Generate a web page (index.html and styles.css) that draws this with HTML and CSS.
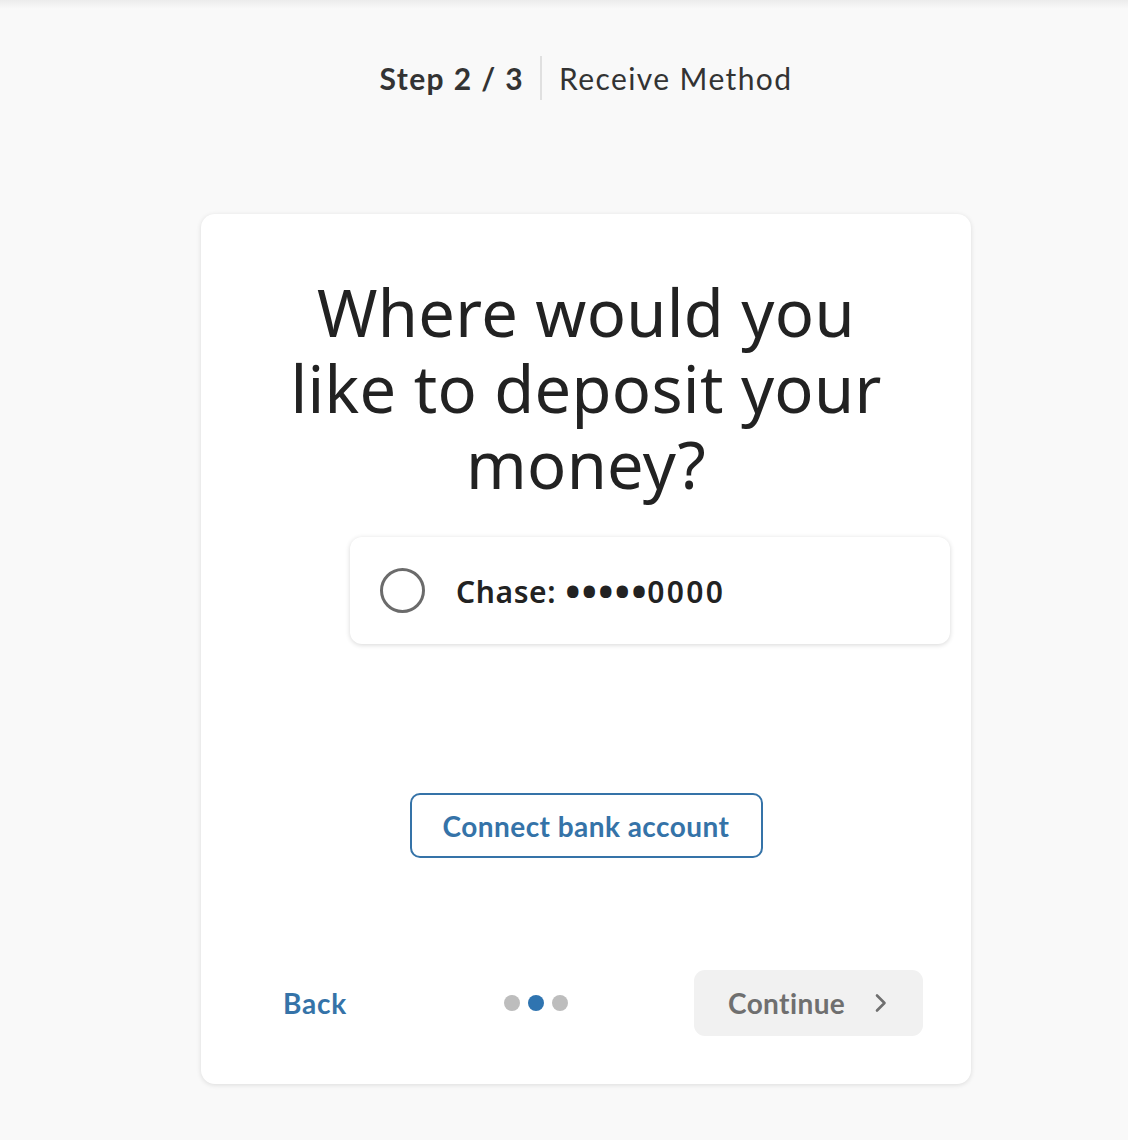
FILE: index.html
```html
<!DOCTYPE html>
<html lang="en">
<head>
<meta charset="utf-8">
<title>Receive Method</title>
<link rel="stylesheet" href="styles.css">
</head>
<body>
<div class="page">
  <header class="steps">
    <span class="step-num">Step 2 / 3</span>
    <span class="step-sep"></span>
    <span class="step-name">Receive Method</span>
  </header>
  <main class="card">
    <h1 class="title">Where would you like to deposit your money?</h1>
    <div class="options">
      <label class="option">
        <span class="radio"></span>
        <span class="option-text">Chase: <span class="mask">•••••</span><span class="digits">0000</span></span>
      </label>
    </div>
    <div class="connect-wrap">
      <button class="connect">Connect bank account</button>
    </div>
    <footer class="footer">
      <button class="back">Back</button>
      <div class="dots">
        <span class="dot"></span>
        <span class="dot dot-active"></span>
        <span class="dot"></span>
      </div>
      <button class="continue">Continue
        <svg class="chev" width="14" height="20" viewBox="0 0 14 20"><path d="M3 2.5 L10.5 10 L3 17.5" fill="none" stroke="#6f6f6f" stroke-width="2.6" stroke-linecap="round" stroke-linejoin="round"/></svg>
      </button>
    </footer>
  </main>
</div>
</body>
</html>
```

FILE: styles.css
```css
html, body {
  margin: 0;
  padding: 0;
}
body {
  background: #f9f9f9;
  font-family: "Lato", "Open Sans", sans-serif;
  color: #222;
}
.page {
  min-height: 1140px;
  background: linear-gradient(#ececec 0px, #f9f9f9 9px);
  display: flex;
  flex-direction: column;
  align-items: center;
  padding: 55px 0 0 44px;
  box-sizing: border-box;
}
.steps {
  display: flex;
  align-items: center;
  height: 46px;
}
.step-num {
  font-weight: 700;
  font-size: 30px;
  color: #333;
  letter-spacing: 1.4px;
}
.step-sep {
  width: 2px;
  height: 44px;
  background: #e0e0e0;
  margin: 0 17px 0 16px;
}
.step-name {
  font-size: 30px;
  color: #333;
  letter-spacing: 1.4px;
}
.card {
  margin-top: 113px;
  width: 770px;
  height: 870px;
  box-sizing: border-box;
  background: #fff;
  border-radius: 14px;
  box-shadow: 0 1px 5px rgba(0,0,0,0.12);
  display: flex;
  flex-direction: column;
  padding: 60px 0 48px;
}
.title {
  margin: 0 auto;
  width: 640px;
  text-align: center;
  font-family: "Noto Sans", "Open Sans", sans-serif;
  font-weight: 400;
  font-size: 65px;
  line-height: 76px;
  letter-spacing: 0.3px;
  color: #222;
}
.options {
  margin-top: 35px;
  padding-left: 149px;
}
.option {
  width: 600px;
  height: 107px;
  box-sizing: border-box;
  background: #fff;
  border-radius: 12px;
  box-shadow: 0 1px 5px rgba(0,0,0,0.16);
  display: flex;
  align-items: center;
  padding-left: 30px;
}
.radio {
  width: 39px;
  height: 39px;
  border: 3px solid #6b6b6b;
  border-radius: 50%;
}
.option-text {
  margin-left: 31px;
  font-family: "Noto Sans", sans-serif;
  font-weight: 600;
  font-size: 30px;
  letter-spacing: 0.6px;
  color: #222;
}
.mask {
  font-size: 44px;
  line-height: 1;
  letter-spacing: 0;
  vertical-align: -5px;
}
.digits {
  letter-spacing: 2.4px;
}
.connect-wrap {
  margin-top: 149px;
  display: flex;
  justify-content: center;
}
.connect {
  width: 353px;
  height: 65px;
  background: #fff;
  border: 2px solid #3573a8;
  border-radius: 10px;
  color: #3573a8;
  font-family: "Lato", sans-serif;
  font-weight: 700;
  font-size: 28px;
  letter-spacing: 0.45px;
  cursor: pointer;
}
.footer {
  margin-top: auto;
  display: flex;
  align-items: center;
  padding: 0 48px 0 82px;
}
.back {
  background: none;
  border: 0;
  padding: 0;
  color: #3573a8;
  font-family: "Lato", sans-serif;
  font-weight: 700;
  font-size: 28px;
  letter-spacing: 0.8px;
}
.dots {
  display: flex;
  gap: 8px;
  margin-left: 157px;
}
.dot {
  width: 16px;
  height: 16px;
  border-radius: 50%;
  background: #bdbdbd;
}
.dot-active {
  background: #2f74b0;
}
.continue {
  margin-left: auto;
  width: 229px;
  height: 66px;
  background: #f1f1f1;
  border: 0;
  border-radius: 11px;
  display: flex;
  align-items: center;
  justify-content: space-between;
  color: #6f6f6f;
  font-family: "Lato", sans-serif;
  font-weight: 700;
  font-size: 28px;
  letter-spacing: 0.4px;
  padding: 0 35px 0 34px;
}
.chev {
  display: block;
}
```
